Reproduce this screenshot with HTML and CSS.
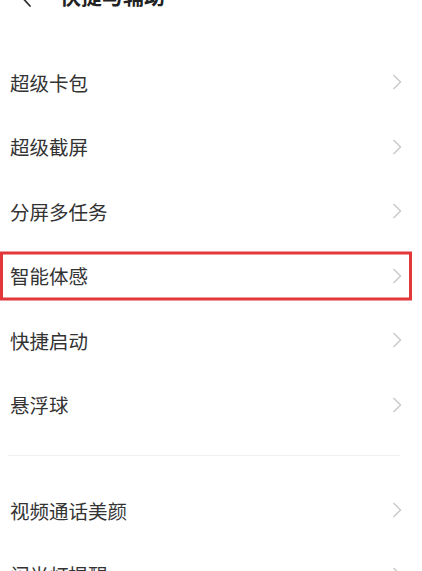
FILE: index.html
```html
<!DOCTYPE html>
<html lang="zh-CN">
<head>
<meta charset="utf-8">
<title>快捷与辅助</title>
<link rel="stylesheet" href="styles.css">
</head>
<body>
<div class="page">
  <header class="topbar">
    <span class="back">
      <svg width="14" height="24" viewBox="0 0 14 24"><path d="M12 1 L2 12 L12 23" fill="none" stroke="#333" stroke-width="1.8" stroke-linecap="round" stroke-linejoin="round"/></svg>
    </span>
    <h1 class="title">快捷与辅助</h1>
  </header>

  <ul class="group first">
    <li class="row"><span class="label">超级卡包</span><span class="chev"><svg width="10" height="16" viewBox="0 0 10 16"><path d="M1.5 1 L8.5 8 L1.5 15" fill="none" stroke="#c9c9c9" stroke-width="1.4"/></svg></span></li>
    <li class="row"><span class="label">超级截屏</span><span class="chev"><svg width="10" height="16" viewBox="0 0 10 16"><path d="M1.5 1 L8.5 8 L1.5 15" fill="none" stroke="#c9c9c9" stroke-width="1.4"/></svg></span></li>
    <li class="row"><span class="label">分屏多任务</span><span class="chev"><svg width="10" height="16" viewBox="0 0 10 16"><path d="M1.5 1 L8.5 8 L1.5 15" fill="none" stroke="#c9c9c9" stroke-width="1.4"/></svg></span></li>
    <li class="row highlight"><span class="label">智能体感</span><span class="chev"><svg width="10" height="16" viewBox="0 0 10 16"><path d="M1.5 1 L8.5 8 L1.5 15" fill="none" stroke="#c9c9c9" stroke-width="1.4"/></svg></span></li>
    <li class="row"><span class="label">快捷启动</span><span class="chev"><svg width="10" height="16" viewBox="0 0 10 16"><path d="M1.5 1 L8.5 8 L1.5 15" fill="none" stroke="#c9c9c9" stroke-width="1.4"/></svg></span></li>
    <li class="row"><span class="label">悬浮球</span><span class="chev"><svg width="10" height="16" viewBox="0 0 10 16"><path d="M1.5 1 L8.5 8 L1.5 15" fill="none" stroke="#c9c9c9" stroke-width="1.4"/></svg></span></li>
  </ul>

  <div class="divider"></div>

  <ul class="group">
    <li class="row"><span class="label">视频通话美颜</span><span class="chev"><svg width="10" height="16" viewBox="0 0 10 16"><path d="M1.5 1 L8.5 8 L1.5 15" fill="none" stroke="#c9c9c9" stroke-width="1.4"/></svg></span></li>
    <li class="row"><span class="label">闪光灯提醒</span><span class="chev"><svg width="10" height="16" viewBox="0 0 10 16"><path d="M1.5 1 L8.5 8 L1.5 15" fill="none" stroke="#c9c9c9" stroke-width="1.4"/></svg></span></li>
  </ul>
</div>
</body>
</html>
```

FILE: styles.css
```css
html, body {
  margin: 0;
  padding: 0;
  background: #ffffff;
}

body {
  font-family: "Noto Sans CJK SC", "Noto Sans", sans-serif;
  color: #333333;
  overflow: hidden;
}

.page {
  width: 422px;
  height: 571px;
  overflow: hidden;
}

.topbar {
  display: flex;
  align-items: center;
  height: 46px;
  margin-top: -28px;
  padding-left: 18px;
  gap: 28px;
}

.back {
  display: flex;
  align-items: center;
}

.title {
  margin: 0;
  font-size: 21px;
  font-weight: 700;
  color: #222222;
  line-height: 1;
}

.group {
  list-style: none;
  margin: 0;
  padding: 0;
}

.group.first {
  margin-top: 32px;
}

.row {
  position: relative;
  display: flex;
  align-items: center;
  justify-content: space-between;
  height: 64.5px;
  padding: 0 20px 0 10px;
}

.label {
  font-size: 19.5px;
  line-height: 1;
  color: #333333;
}

.chev {
  display: flex;
  align-items: center;
}

.highlight::after {
  content: "";
  position: absolute;
  left: 0;
  right: 10px;
  top: 50%;
  height: 49px;
  transform: translateY(-50%);
  border: 3px solid #e2373b;
  box-sizing: border-box;
  pointer-events: none;
}

.divider {
  height: 1px;
  background: #f1f1f1;
  margin: 18px 22px 22px 8px;
}
```
